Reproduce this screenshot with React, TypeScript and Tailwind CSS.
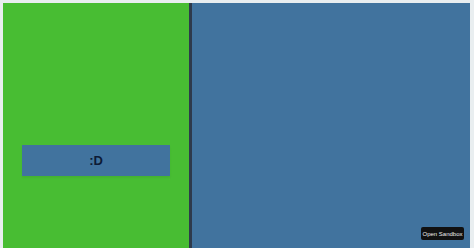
export default function App() {
  return (
    <div className="relative h-[248px] w-[474px] overflow-hidden bg-[#e9eef0] pl-[3px] pr-[4px] pt-[3px] font-['Liberation_Sans',sans-serif]">
      <div className="flex h-full">
        {/* left pane */}
        <div className="flex w-[186px] flex-col items-center bg-[#48bd33] pt-[142px]">
          <button className="flex h-[31px] w-[148px] items-center justify-center bg-[#41739e] text-[13px] font-bold text-[#0d1b36] shadow-[0_2px_2px_rgba(0,0,0,0.06)]">
            :D
          </button>
        </div>
        {/* divider */}
        <div className="w-[3px] bg-[#2e3a4c]" />
        {/* right pane */}
        <div className="flex-1 bg-[#41739e]" />
      </div>

      <button className="absolute bottom-[8px] right-[10px] flex h-[13px] w-[43px] items-center justify-center rounded-[2px] bg-[#111] text-[6px] leading-none text-[#eee]">
        Open Sandbox
      </button>
    </div>
  );
}
